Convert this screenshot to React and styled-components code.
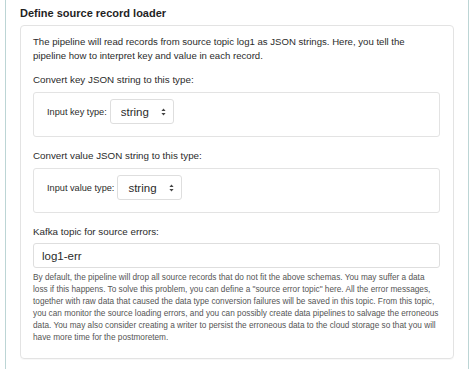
import styled, { createGlobalStyle } from "styled-components";

const GlobalStyle = createGlobalStyle`
  body {
    margin: 0;
    background: #ffffff;
    font-family: "Liberation Sans", Helvetica, Arial, sans-serif;
    color: #2b2b2b;
  }
`;

const Frame = styled.div`
  margin: 0 5px;
  min-height: 369px;
  box-sizing: border-box;
  padding: 6px 14px 0 14px;
  border-left: 1px solid #bcd5d5;
  border-right: 1px solid #bcd5d5;
`;

const Title = styled.h3`
  margin: 0 0 5px 0;
  font-size: 11px;
  line-height: 14px;
  font-weight: bold;
  color: #1f1f1f;
`;

const Card = styled.div`
  border: 1px solid #e3e3e3;
  border-radius: 4px;
  padding: 9px 13px 14px 12px;
  box-shadow: 0 1px 1px rgba(0, 0, 0, 0.03);
`;

const Intro = styled.p`
  margin: 0 0 10px 0;
  font-size: 9.6px;
  line-height: 14px;
  color: #2b2b2b;
`;

const FieldLabel = styled.div`
  font-size: 9.8px;
  line-height: 14px;
  color: #2b2b2b;
  margin-bottom: ${(p) => p.$gap || 5}px;
`;

const Group = styled.div`
  border: 1px solid #e3e3e3;
  border-radius: 3px;
  padding: 6px 12px 12px 13px;
  margin-bottom: 12px;
`;

const Row = styled.div`
  display: flex;
  align-items: center;
  gap: 3px;
`;

const InlineLabel = styled.label`
  font-size: 9.2px;
  color: #2b2b2b;
`;

const SelectWrap = styled.div`
  position: relative;
  width: ${(p) => p.$width}px;
`;

const Select = styled.select`
  appearance: none;
  -webkit-appearance: none;
  width: 100%;
  height: 25px;
  box-sizing: border-box;
  border: 1px solid #dedede;
  border-radius: 3px;
  background: #fff;
  padding: 0 0 0 10px;
  font-family: "Liberation Sans", Helvetica, Arial, sans-serif;
  font-size: 11.5px;
  color: #2b2b2b;
  outline: none;
`;

const Arrow = styled.svg`
  position: absolute;
  right: 8px;
  top: 50%;
  transform: translateY(-50%);
  pointer-events: none;
`;

const TextInput = styled.input`
  display: block;
  width: 100%;
  height: 25px;
  box-sizing: border-box;
  border: 1px solid #dedede;
  border-radius: 3px;
  padding: 0 8px;
  font-family: "Liberation Sans", Helvetica, Arial, sans-serif;
  font-size: 11.5px;
  color: #2b2b2b;
  outline: none;
`;

const Help = styled.div`
  margin: 4px 0 0 0;
  font-size: 8.25px;
  line-height: 12px;
  color: #555555;
`;

const HelpLine = styled.span`
  display: block;
  white-space: nowrap;
`;

const helpLines = [
  "By default, the pipeline will drop all source records that do not fit the above schemas. You may suffer a data",
  'loss if this happens. To solve this problem, you can define a "source error topic" here. All the error messages,',
  "together with raw data that caused the data type conversion failures will be saved in this topic. From this topic,",
  "you can monitor the source loading errors, and you can possibly create data pipelines to salvage the erroneous",
  "data. You may also consider creating a writer to persist the erroneous data to the cloud storage so that you will",
  "have more time for the postmoretem.",
];

function TypeSelect({ label, width }) {
  return (
    <Row>
      <InlineLabel>{label}</InlineLabel>
      <SelectWrap $width={width}>
        <Select defaultValue="string">
          <option value="string">string</option>
          <option value="json">json</option>
          <option value="long">long</option>
        </Select>
        <Arrow width="5" height="8" viewBox="0 0 5 8">
          <path d="M2.5 0.5 L4.6 3 H0.4 Z M2.5 7.5 L4.6 5 H0.4 Z" fill="#444" />
        </Arrow>
      </SelectWrap>
    </Row>
  );
}

export default function App() {
  return (
    <>
      <GlobalStyle />
      <Frame>
        <Title>Define source record loader</Title>
        <Card>
          <Intro>
            The pipeline will read records from source topic log1 as JSON strings. Here, you tell the
            pipeline how to interpret key and value in each record.
          </Intro>
          <FieldLabel>Convert key JSON string to this type:</FieldLabel>
          <Group>
            <TypeSelect label="Input key type:" width={64} />
          </Group>
          <FieldLabel>Convert value JSON string to this type:</FieldLabel>
          <Group>
            <TypeSelect label="Input value type:" width={65} />
          </Group>
          <FieldLabel $gap={4}>Kafka topic for source errors:</FieldLabel>
          <TextInput defaultValue="log1-err" />
          <Help>
            {helpLines.map((line) => (
              <HelpLine key={line}>{line}</HelpLine>
            ))}
          </Help>
        </Card>
      </Frame>
    </>
  );
}
